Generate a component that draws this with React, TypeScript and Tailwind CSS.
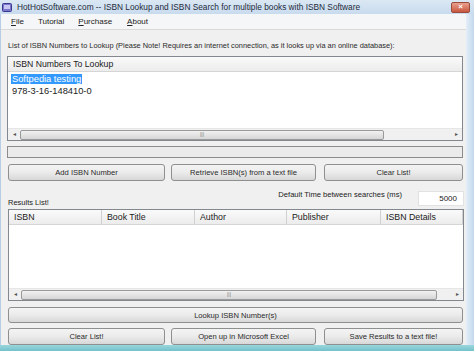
import React from 'react';

const font = { fontFamily: '"Liberation Sans", Arial, sans-serif' };

function Btn({ label, className = '' }: { label: string; className?: string }) {
  return (
    <div
      className={`flex items-center justify-center rounded-[3px] border border-[#8e8f8f] bg-gradient-to-b from-[#f4f4f4] via-[#ebebeb] to-[#d8d8d8] text-[7.6px] text-[#2a2a2a] ${className}`}
    >
      {label}
    </div>
  );
}

function HScroll({ thumbEnd }: { thumbEnd: string }) {
  return (
    <div className="flex h-[12px] items-center border-t border-[#e6e6e6] bg-[#f0f0f0]">
      <div className="flex w-[12px] items-center justify-center text-[6px] text-[#555]">◂</div>
      <div
        className={`flex h-[10px] items-center justify-center rounded-[2px] border border-[#9a9a9a] bg-gradient-to-b from-[#f2f2f2] to-[#d6d6d6] text-[5px] text-[#777] ${thumbEnd}`}
      >
        |||
      </div>
      <div className="flex-1" />
      <div className="flex w-[12px] items-center justify-center text-[6px] text-[#555]">▸</div>
    </div>
  );
}

export default function App() {
  const cols = [
    { name: 'ISBN', w: 'w-[93px]' },
    { name: 'Book Title', w: 'w-[93px]' },
    { name: 'Author', w: 'w-[92px]' },
    { name: 'Publisher', w: 'w-[94px]' },
    { name: 'ISBN Details', w: 'flex-1' },
  ];

  return (
    <div className="flex h-[351px] w-[474px] flex-col overflow-hidden bg-[#c9dcee]" style={font}>
      {/* Title bar */}
      <div className="flex h-[15px] items-center bg-gradient-to-b from-[#dbe8f4] to-[#c8dbee] pl-[2px] pr-[4px]">
        <svg width="11" height="11" viewBox="0 0 11 11" className="mr-[4px]">
          <rect x="0.5" y="1.5" width="9" height="8" rx="1" fill="#7a76c9" stroke="#3b3890" />
          <rect x="2" y="3" width="6" height="4" fill="#c8c6f2" />
        </svg>
        <span className="text-[8.3px] text-[#1e2a3a]">
          HotHotSoftware.com -- ISBN Lookup and ISBN Search for multiple books with ISBN Software
        </span>
        <div className="flex-1" />
        <div className="flex h-[11px] w-[19px] items-center justify-center rounded-[2px] border border-[#9b4a3c] bg-gradient-to-b from-[#e8a08f] to-[#c9553d] text-[8px] font-bold leading-none text-white">
          ×
        </div>
      </div>

      <div className="flex flex-1">
        <div className="flex w-[466px] flex-col border-l border-[#b7cde3] bg-[#f0f0f0]">
          {/* Menu */}
          <div className="flex h-[16px] items-center border-b border-[#d9d9d9] bg-[#f5f6f7] text-[8px] text-[#222]">
            <span className="ml-[10px]"><u>F</u>ile</span>
            <span className="ml-[14px]">Tutorial</span>
            <span className="ml-[14px]"><u>P</u>urchase</span>
            <span className="ml-[15px]"><u>A</u>bout</span>
          </div>

          <div className="mt-[11px] ml-[7px] h-[10px] text-[7.4px] leading-[10px] text-[#2a2a2a]">
            List of ISBN Numbers to Lookup (Please Note! Requires an internet connection, as it looks up via an online database):
          </div>

          {/* ISBN list */}
          <div className="mt-[5px] ml-[6px] flex h-[85px] w-[456px] flex-col border border-[#828790] bg-white">
            <div className="flex h-[15px] items-center border-b border-[#d5d5d5] bg-gradient-to-b from-[#fafafa] to-[#ececec] pl-[5px] text-[8.7px] text-[#222]">
              ISBN Numbers To Lookup
            </div>
            <div className="flex-1 pl-[3px] pt-[1px] text-[9.3px] leading-[12px] text-[#222]">
              <div>
                <span className="bg-[#3399ff] px-[1px] text-white">Softpedia testing</span>
              </div>
              <div className="pl-[1px]">978-3-16-148410-0</div>
            </div>
            <HScroll thumbEnd="w-[364px]" />
          </div>

          <div className="mt-[5px] ml-[6px] h-[12px] w-[456px] border border-[#8c8c8c] bg-[#ebebeb]" />

          <div className="mt-[6px] ml-[7px] flex h-[17px] w-[455px] gap-[6px]">
            <Btn label="Add ISBN Number" className="w-[157px]" />
            <Btn label="Retrieve ISBN(s) from a text file" className="w-[145px]" />
            <Btn label="Clear List!" className="ml-[2px] flex-1" />
          </div>

          <div className="ml-[7px] flex h-[28px] w-[456px] items-end">
            <span className="mb-[1px] text-[7.5px] text-[#222]">Results List!</span>
            <div className="flex-1" />
            <span className="mb-[9px] mr-[16px] text-[7.6px] text-[#222]">Default Time between searches (ms)</span>
            <div className="mb-[3px] flex h-[15px] w-[46px] items-center justify-end border border-[#e2e2e2] bg-white pr-[6px] text-[8px] text-[#222]">
              5000
            </div>
          </div>

          {/* Results */}
          <div className="ml-[7px] flex h-[92px] w-[456px] flex-col border border-[#828790] bg-white">
            <div className="flex h-[15px] border-b border-[#d5d5d5] bg-gradient-to-b from-[#fafafa] to-[#ececec] text-[8.8px] text-[#222]">
              {cols.map((c) => (
                <div key={c.name} className={`flex items-center border-r border-[#d0d0d0] pl-[5px] ${c.w}`}>
                  {c.name}
                </div>
              ))}
            </div>
            <div className="flex-1" />
            <HScroll thumbEnd="w-[416px]" />
          </div>

          <Btn label="Lookup ISBN Number(s)" className="mt-[6px] ml-[7px] h-[16px] w-[455px]" />

          <div className="mt-[5px] ml-[7px] flex h-[17px] w-[455px] gap-[6px]">
            <Btn label="Clear List!" className="w-[157px]" />
            <Btn label="Open up in Microsoft Excel" className="w-[145px]" />
            <Btn label="Save Results to a text file!" className="ml-[2px] flex-1" />
          </div>
          <div className="flex-1" />
        </div>
        <div className="flex-1 bg-gradient-to-r from-[#e4eef8] to-[#c2d8ec]" />
      </div>
      <div className="h-[6px] bg-gradient-to-b from-[#9ad7dc] to-[#74c2cc]" />
    </div>
  );
}
